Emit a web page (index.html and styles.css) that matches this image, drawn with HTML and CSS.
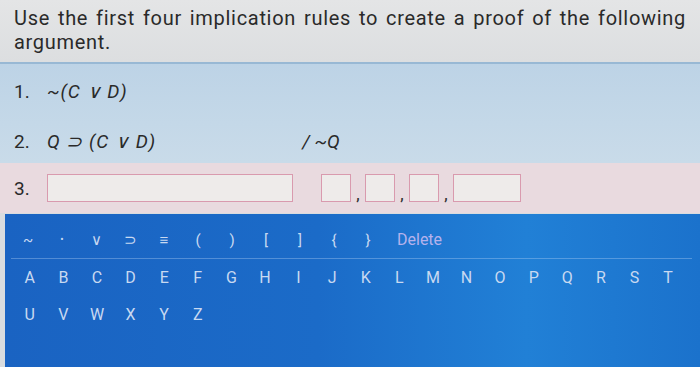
FILE: index.html
```html
<!DOCTYPE html>
<html>
<head>
<meta charset="utf-8">
<link rel="stylesheet" href="styles.css">
</head>
<body>
<div class="page">
  <div class="prompt">Use the first four implication rules to create a proof of the following argument.</div>
  <div class="premises">
    <div class="line line-1"><span class="num">1.</span><span class="formula">~(C ∨ D)</span></div>
    <div class="line line-2"><span class="num">2.</span><span class="formula f2">Q ⊃ (C ∨ D)</span><span class="concl">/ ~Q</span></div>
  </div>
  <div class="line line-3">
    <span class="num">3.</span>
    <span class="input wide"></span>
    <span class="just">
      <span class="input small"></span><span class="comma">,</span>
      <span class="input small"></span><span class="comma">,</span>
      <span class="input small"></span><span class="comma">,</span>
      <span class="input rule"></span>
    </span>
  </div>
  <div class="keyboard">
    <div class="symbols">
      <span class="key">~</span><span class="key dot">•</span><span class="key">∨</span><span class="key">⊃</span><span class="key">≡</span><span class="key">(</span><span class="key">)</span><span class="key">[</span><span class="key">]</span><span class="key">{</span><span class="key">}</span><span class="key delete">Delete</span>
    </div>
    <div class="letters">
      <span class="key">A</span><span class="key">B</span><span class="key">C</span><span class="key">D</span><span class="key">E</span><span class="key">F</span><span class="key">G</span><span class="key">H</span><span class="key">I</span><span class="key">J</span><span class="key">K</span><span class="key">L</span><span class="key">M</span><span class="key">N</span><span class="key">O</span><span class="key">P</span><span class="key">Q</span><span class="key">R</span><span class="key">S</span><span class="key">T</span>
      <span class="key">U</span><span class="key">V</span><span class="key">W</span><span class="key">X</span><span class="key">Y</span><span class="key">Z</span>
    </div>
  </div>
</div>
</body>
</html>
```
FILE: styles.css
```css
html, body {
  margin: 0;
  padding: 0;
}
body {
  width: 700px;
  height: 367px;
  overflow: hidden;
  background: #d9dcdf;
  font-family: Roboto, "Liberation Sans", sans-serif;
  color: #262626;
}
.page {
  display: flex;
  flex-direction: column;
  height: 367px;
}
.prompt {
  height: 62px;
  box-sizing: border-box;
  padding: 6px 14px 0 14px;
  font-size: 20px;
  line-height: 24px;
  letter-spacing: 0.7px;
  text-align: justify;
  background: linear-gradient(180deg, #e4e5e6 0%, #dcdee0 100%);
  color: #2a2a2a;
}
.premises {
  border-top: 2px solid #98b8d4;
  background: linear-gradient(180deg, #bdd3e6 0%, #c4d8e8 60%, #c9dbe9 100%);
}
.line {
  display: flex;
  align-items: center;
  padding-left: 14px;
  font-size: 19px;
  color: #2a2a2a;
}
.line-1 {
  height: 51px;
  padding-top: 4px;
  box-sizing: border-box;
}
.line-2 {
  height: 48px;
  padding-top: 4px;
  box-sizing: border-box;
}
.num {
  width: 33px;
  flex: none;
}
.formula {
  font-style: italic;
  letter-spacing: 1px;
}
.concl {
  margin-left: 146px;
  font-style: italic;
}
.line-3 {
  height: 50px;
  background: #e9dadf;
}
.input {
  display: inline-block;
  height: 28px;
  box-sizing: border-box;
  border: 1px solid #d99aae;
  background: #eeebea;
}
.wide {
  width: 246px;
}
.just {
  display: flex;
  align-items: flex-end;
  margin-left: 28px;
}
.small {
  width: 30px;
}
.rule {
  width: 68px;
}
.comma {
  width: 14px;
  text-align: center;
  font-size: 14px;
  line-height: 14px;
  font-weight: bold;
  color: #333;
}
.keyboard {
  flex: 1;
  margin-left: 5px;
  margin-top: 1px;
  background: linear-gradient(90deg, #1a63c2 0%, #1b6bc8 45%, #2180d6 75%, #1b72cc 100%);
  padding: 11px 8px 0 6px;
}
.symbols {
  display: flex;
  height: 29px;
  align-items: center;
  padding-bottom: 4px;
  border-bottom: 1px solid rgba(190, 215, 245, 0.35);
}
.key {
  width: 34px;
  text-align: center;
  font-size: 16px;
  color: #c8d9f1;
}
.symbols .key {
  font-size: 15px;
}
.symbols .dot {
  font-size: 10px;
}
.symbols .delete {
  width: auto;
  margin-left: 12px;
  color: #b5b2ec;
  font-size: 16px;
}
.letters {
  display: grid;
  grid-template-columns: repeat(20, 33.6px);
  grid-auto-rows: 37px;
  align-items: center;
  padding-left: 2px;
}
.letters .key {
  width: auto;
}
```
